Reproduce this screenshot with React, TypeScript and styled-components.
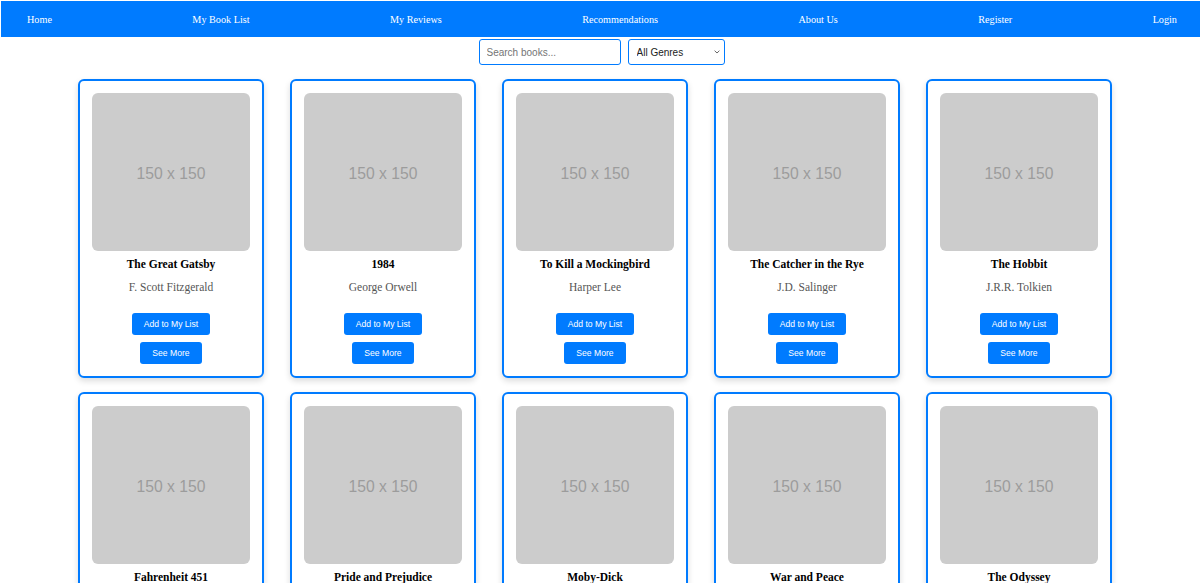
import styled, { createGlobalStyle } from 'styled-components'

const books = [
  { title: 'The Great Gatsby', author: 'F. Scott Fitzgerald' },
  { title: '1984', author: 'George Orwell' },
  { title: 'To Kill a Mockingbird', author: 'Harper Lee' },
  { title: 'The Catcher in the Rye', author: 'J.D. Salinger' },
  { title: 'The Hobbit', author: 'J.R.R. Tolkien' },
  { title: 'Fahrenheit 451', author: 'Ray Bradbury' },
  { title: 'Pride and Prejudice', author: 'Jane Austen' },
  { title: 'Moby-Dick', author: 'Herman Melville' },
  { title: 'War and Peace', author: 'Leo Tolstoy' },
  { title: 'The Odyssey', author: 'Homer' },
]

const links = [
  'Home',
  'My Book List',
  'My Reviews',
  'Recommendations',
  'About Us',
  'Register',
  'Login',
]

export default function App() {
  return (
    <>
      <GlobalStyle />
      <Page>
        <Nav>
          {links.map((l) => (
            <NavLink key={l} href="#">
              {l}
            </NavLink>
          ))}
        </Nav>
        <Filters>
          <Search placeholder="Search books..." />
          <SelectWrap>
            <GenreSelect defaultValue="all">
              <option value="all">All Genres</option>
              <option value="fiction">Fiction</option>
              <option value="fantasy">Fantasy</option>
            </GenreSelect>
            <Chevron width="6" height="4" viewBox="0 0 6 4">
              <path d="M0.6 0.7 L3 3 L5.4 0.7" fill="none" stroke="#555" strokeWidth="0.9" />
            </Chevron>
          </SelectWrap>
        </Filters>
        <Grid>
          {books.map((b) => (
            <Card key={b.title}>
              <Placeholder>150 x 150</Placeholder>
              <Title>{b.title}</Title>
              <Author>{b.author}</Author>
              <Actions>
                <Button>Add to My List</Button>
                <Button>See More</Button>
              </Actions>
            </Card>
          ))}
        </Grid>
      </Page>
    </>
  )
}

const GlobalStyle = createGlobalStyle`
  body {
    margin: 0;
    background: #fff;
    font-family: "Liberation Serif", "Times New Roman", serif;
  }
`

const Page = styled.div`
  padding: 1px 0 0 1px;
`

const Nav = styled.nav`
  display: flex;
  justify-content: space-between;
  align-items: center;
  height: 36px;
  padding: 0 23px 0 26px;
  background: #007bff;
`

const NavLink = styled.a`
  color: #fff;
  font-size: 10.2px;
  text-decoration: none;
`

const Filters = styled.div`
  display: flex;
  justify-content: center;
  gap: 7px;
  margin-top: 2px;
  padding-left: 2px;
`

const Search = styled.input`
  box-sizing: border-box;
  width: 142px;
  height: 26px;
  padding: 0 7px;
  border: 1.5px solid #007bff;
  border-radius: 3px;
  font-family: "Liberation Sans", Arial, sans-serif;
  font-size: 10px;
  outline: none;

  &::placeholder {
    color: #757575;
  }
`

const SelectWrap = styled.div`
  position: relative;
  display: flex;
`

const GenreSelect = styled.select`
  box-sizing: border-box;
  width: 97px;
  height: 26px;
  padding: 0 8px;
  border: 1.5px solid #007bff;
  border-radius: 3px;
  background: #fff;
  color: #222;
  font-family: "Liberation Sans", Arial, sans-serif;
  font-size: 10px;
  appearance: none;
  outline: none;
`

const Chevron = styled.svg`
  position: absolute;
  right: 5px;
  top: 11px;
  pointer-events: none;
`

const Grid = styled.div`
  display: grid;
  grid-template-columns: repeat(5, 186px);
  column-gap: 26px;
  row-gap: 14px;
  margin-top: 14px;
  padding-left: 77px;
`

const Card = styled.div`
  box-sizing: border-box;
  display: flex;
  flex-direction: column;
  align-items: center;
  width: 186px;
  padding: 12px 12px 12px;
  border: 2px solid #007bff;
  border-radius: 6px;
  background: #fff;
  box-shadow: 0 3px 6px rgba(0, 0, 0, 0.14);
`

const Placeholder = styled.div`
  display: flex;
  align-items: center;
  justify-content: center;
  box-sizing: border-box;
  width: 158px;
  height: 158px;
  padding-top: 3px;
  border-radius: 6px;
  background: #cccccc;
  color: #9c9c9c;
  font-family: "Liberation Sans", Arial, sans-serif;
  font-size: 15.7px;
`

const Title = styled.h3`
  margin: 6px 0 0;
  font-size: 11.5px;
  line-height: 14px;
  font-weight: bold;
  color: #000;
  text-align: center;
`

const Author = styled.p`
  margin: 9px 0 0;
  font-size: 11.5px;
  line-height: 14px;
  color: #555;
  text-align: center;
`

const Actions = styled.div`
  display: flex;
  flex-direction: column;
  align-items: center;
  gap: 7px;
  margin-top: 19px;
`

const Button = styled.button`
  height: 22px;
  padding: 0 12px;
  border: none;
  border-radius: 3px;
  background: #007bff;
  color: #fff;
  font-family: "Liberation Sans", Arial, sans-serif;
  font-size: 8.6px;
  font-weight: 500;
  cursor: pointer;
`
